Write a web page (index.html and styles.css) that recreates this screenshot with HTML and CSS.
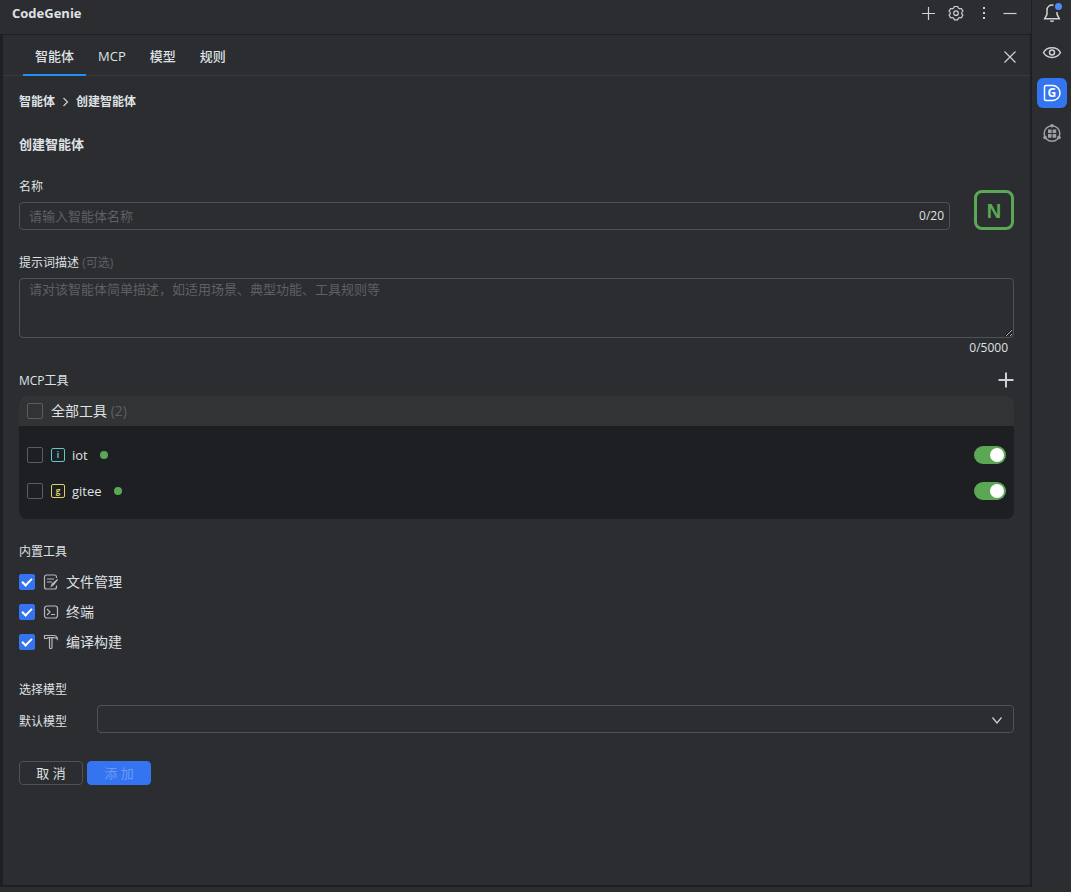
FILE: index.html
```html
<!DOCTYPE html>
<html lang="zh-CN">
<head>
<meta charset="utf-8">
<title>CodeGenie</title>
<link rel="stylesheet" href="styles.css">
</head>
<body>
<div class="app">
  <div class="window">
    <header class="titlebar">
      <h1 class="title">CodeGenie</h1>
      <div class="title-actions">
        <button class="icon-btn wide" aria-label="新建"><svg width="16" height="16" viewBox="0 0 16 16"><path d="M8.500 2v13M2 8.500h13"/></svg></button>
        <button class="icon-btn wide" aria-label="设置"><svg width="16" height="16" viewBox="0 0 16 16"><path d="M6.300 1.500h3.400l.6 1.500 1.300.8 1.800-.3 1.500 2.600-1.100 1.400v1.300l1.100 1.400-1.500 2.600-1.800-.3-1.300.8-.6 1.500H6.300l-.6-1.500-1.300-.8-1.800.3-1.500-2.600 1.100-1.400V7.500L1.100 6.100l1.500-2.600 1.800.3L5.700 3z" stroke-linejoin="round"/><circle cx="8" cy="8.150" r="2.300"/></svg></button>
        <button class="icon-btn" aria-label="更多"><svg width="16" height="16" viewBox="0 0 16 16"><path class="solid" d="M7 2h2v2H7zM7 7h2v2H7zM7 12h2v2H7z"/></svg></button>
        <button class="icon-btn" aria-label="最小化"><svg width="16" height="16" viewBox="0 0 16 16"><path d="M1.500 8.500h13"/></svg></button>
      </div>
    </header>

    <main class="panel">
      <nav class="tabs">
        <a class="tab active" href="#agent">智能体</a>
        <a class="tab" href="#mcp">MCP</a>
        <a class="tab" href="#model">模型</a>
        <a class="tab" href="#rules">规则</a>
        <button class="icon-btn close" aria-label="关闭"><svg width="16" height="16" viewBox="0 0 16 16"><path d="M2.500 2.500l11 11M13.500 2.500l-11 11"/></svg></button>
      </nav>

      <form class="form">
        <div class="crumbs">
          <a href="#agent">智能体</a>
          <svg width="9" height="12" viewBox="0 0 9 12"><path d="M2.500 2l4 4-4 4"/></svg>
          <span>创建智能体</span>
        </div>
        <h2 class="heading">创建智能体</h2>

        <div class="name-row">
          <div class="field">
            <label class="label" for="name">名称</label>
            <div class="input-box">
              <input id="name" class="input" type="text" placeholder="请输入智能体名称">
              <span class="count">0/20</span>
            </div>
          </div>
          <div class="avatar">N</div>
        </div>

        <div class="field section">
          <label class="label" for="desc">提示词描述 <span class="muted">(可选)</span></label>
          <textarea id="desc" class="textarea" placeholder="请对该智能体简单描述，如适用场景、典型功能、工具规则等"></textarea>
          <span class="count below">0/5000</span>
        </div>

        <section class="mcp">
          <div class="label-row">
            <h3 class="label">MCP工具</h3>
            <button type="button" class="icon-btn add" aria-label="添加工具"><svg width="16" height="16" viewBox="0 0 16 16"><path d="M8 .5v15M.5 8h15"/></svg></button>
          </div>
          <div class="card">
            <label class="card-head"><input class="check" type="checkbox"><span>全部工具 <span class="muted">(2)</span></span></label>
            <div class="card-body">
              <div class="tool">
                <label class="tool-name"><input class="check" type="checkbox"><span class="badge teal">i</span><span>iot</span></label>
                <span class="dot"></span>
                <input class="switch" type="checkbox" aria-label="启用 iot" checked>
              </div>
              <div class="tool">
                <label class="tool-name"><input class="check" type="checkbox"><span class="badge yellow">g</span><span>gitee</span></label>
                <span class="dot"></span>
                <input class="switch" type="checkbox" aria-label="启用 gitee" checked>
              </div>
            </div>
          </div>
        </section>

        <section class="field section">
          <h3 class="label">内置工具</h3>
          <div class="builtins">
            <label class="builtin"><input class="check" type="checkbox" checked><svg width="16" height="16" viewBox="0 0 16 16"><path d="M13.500 4V3a2 2 0 0 0-2-2h-8a2 2 0 0 0-2 2v10a2 2 0 0 0 2 2h8a2 2 0 0 0 2-2v-1.500M4 5h7M4 8h5M8.500 12l.6-1.800L14.600 5.500l-4 5z"/></svg><span>文件管理</span></label>
            <label class="builtin"><input class="check" type="checkbox" checked><svg width="16" height="16" viewBox="0 0 16 16"><rect x="1.500" y="2" width="13" height="12" rx="2.500"/><path d="M4 5l3 3-3 3M8 10.500h4"/></svg><span>终端</span></label>
            <label class="builtin"><input class="check" type="checkbox" checked><svg width="16" height="16" viewBox="0 0 16 16"><path d="M1.500 1.500v3h2.500l1-.8h5.500c1.800 0 3 .5 4 1.500C14.300 2.800 12.800 1.500 10.500 1.500H5zM6.500 4v9.500a1 1 0 0 0 1 1h.5a1 1 0 0 0 1-1V4"/></svg><span>编译构建</span></label>
          </div>
        </section>

        <section class="field section">
          <h3 class="label">选择模型</h3>
          <div class="model-row">
            <label class="label" for="model">默认模型</label>
            <div class="select-box">
              <select id="model" class="select"><option></option></select>
              <svg class="chevron" width="12" height="12" viewBox="0 0 12 12"><path d="M1.500 3.500L6 9l4.500-5.500"/></svg>
            </div>
          </div>
        </section>

        <div class="buttons">
          <button type="button" class="btn">取 消</button>
          <button type="button" class="btn primary" disabled>添 加</button>
        </div>
      </form>
    </main>
    <footer class="statusbar"></footer>
  </div>

  <aside class="rail">
    <button class="rail-btn first" aria-label="通知"><svg width="20" height="20" viewBox="0 0 20 20"><path d="M11.500 2.200A5 5 0 0 0 5 7.200v4L2.700 15.800h14.600L15 11.200V9"/><path class="solid" d="M7.800 17.500h4.400c-.5 2-3.900 2-4.400 0z"/><circle class="alert" cx="16.500" cy="3.500" r="3.500"/></svg></button>
    <button class="rail-btn" aria-label="预览"><svg width="20" height="20" viewBox="0 0 20 20"><path d="M1.500 9.500C5 3 15 3 18.500 9.500 15 16 5 16 1.500 9.500z"/><circle cx="10" cy="9.500" r="2.500"/></svg></button>
    <button class="rail-btn current" aria-label="CodeGenie"><svg width="20" height="20" viewBox="0 0 20 20"><path d="M4 2.500h6.500a7.500 7.500 0 0 1 0 15H4A1.500 1.500 0 0 1 2.500 16V4A1.500 1.500 0 0 1 4 2.500z"/><text x="9.800" y="14.300" text-anchor="middle">G</text></svg></button>
    <button class="rail-btn" aria-label="组件"><svg class="dim" width="20" height="20" viewBox="0 0 20 20"><circle cx="10" cy="10.500" r="7.800"/><path class="solid" d="M6 6.500h3.600v3.600H6zM10.600 6.500h3.600v3.600h-3.600zM6 11.100h3.600v3.600H6zM10.600 11.100h3.600v3.600h-3.600z"/><circle class="solid" cx="10" cy="2.800" r="1.800"/><circle class="solid" cx="3" cy="14.500" r="1.800"/><circle class="solid" cx="17" cy="14.500" r="1.800"/></svg></button>
  </aside>
</div>
</body>
</html>
```
FILE: styles.css
```css
* { box-sizing: border-box; }

:root {
  color-scheme: dark;
  --bg: #2b2d30;
  --edge: #1e1f22;
  --line: #4e5157;
  --text: #dfe1e5;
  --muted: #5d6065;
  --blue: #3574f0;
  --green: #5ba854;
}

body {
  margin: 0;
  background: var(--bg);
  color: var(--text);
  font: 12px/20px "Open Sans", "Noto Sans CJK SC", sans-serif;
}

h1, h2, h3 { margin: 0; }
a { color: inherit; text-decoration: none; }
button, input, textarea, select { font: inherit; color: inherit; }

svg {
  display: block;
  flex: none;
  fill: none;
  stroke: #ced0d6;
  stroke-width: 1.2;
}
svg .solid { fill: #ced0d6; stroke: none; }

.app { display: flex; min-height: 100vh; }
.window { flex: 1; min-width: 0; display: flex; flex-direction: column; }

.titlebar {
  display: flex;
  align-items: center;
  justify-content: space-between;
  height: 35px;
  padding: 0 13px 8px 12px;
  border-bottom: 1px solid var(--edge);
  border-right: 1px solid var(--edge);
}
.title { font-size: 13px; font-weight: 700; }
.title-actions { display: flex; gap: 10px; }
.title-actions .wide { padding-right: 2px; }

.icon-btn {
  display: flex;
  padding: 0;
  border: 0;
  background: none;
}

.panel {
  flex: 1;
  border: solid var(--edge);
  border-width: 0 2px 2px 3px;
}
.statusbar { height: 5px; }

.tabs {
  display: flex;
  align-items: center;
  height: 41px;
  padding: 0 12px 0 20px;
  border-bottom: 1px solid #393b40;
  font-size: 13px;
  font-weight: 500;
}
.tab { height: 41px; padding: 0 12px; line-height: 42px; }
.tab.active { border-bottom: 2px solid #2090f5; }
.close { margin-left: auto; padding-top: 4px; }

.form { padding: 16px; }
.crumbs { display: flex; align-items: center; gap: 6px; font-weight: 700; }
.heading { margin: 22px 0; font-size: 13px; line-height: 20px; }

.label { display: block; padding-top: 2px; font-size: 12px; font-weight: 400; line-height: 20px; }
.muted { color: var(--muted); }
.field { flex: 1; display: flex; flex-direction: column; gap: 5px; }
.section { margin-top: 21px; }

.name-row { display: flex; align-items: flex-end; gap: 24px; margin-top: -1px; }
.input-box {
  display: flex;
  align-items: center;
  height: 28px;
  padding: 0 5px 0 9px;
  border: 1px solid var(--line);
  border-radius: 4px;
}
.input {
  flex: 1;
  min-width: 0;
  padding: 0;
  border: 0;
  outline: 0;
  background: none;
  font-size: 13px;
}
::placeholder { color: var(--muted); opacity: 1; }

.avatar {
  display: grid;
  place-items: center;
  width: 40px;
  height: 40px;
  padding-top: 2px;
  border: 3px solid var(--green);
  border-radius: 8px;
  color: var(--green);
  font: 700 20px/20px "Liberation Sans", sans-serif;
}

.textarea {
  display: block;
  width: 100%;
  height: 60px;
  padding: 0 9px;
  border: 1px solid var(--line);
  border-radius: 4px;
  background: none;
  font-size: 13px;
  line-height: 20px;
  resize: vertical;
}
.count.below { align-self: flex-end; margin: -5px 6px 0 0; }

.mcp { margin-top: 11px; }
.label-row { display: flex; align-items: center; justify-content: space-between; margin-bottom: 5px; }
.add svg { stroke-width: 2; }

.card { overflow: hidden; border-radius: 8px; background: var(--edge); font-size: 14px; }
.card-head {
  display: flex;
  align-items: center;
  gap: 8px;
  height: 30px;
  padding: 0 8px;
  background: #323335;
}
.card-body { padding: 11px 8px 10px; }
.tool { display: flex; align-items: center; gap: 12px; height: 36px; font-size: 13px; }
.tool-name { display: flex; align-items: center; gap: 7px; }
.tool-name .check { margin-right: 1px; }
.badge {
  display: grid;
  place-items: center;
  width: 14px;
  height: 14px;
  border: 1px solid;
  border-radius: 2px;
  font-size: 8px;
  font-weight: 700;
  line-height: 8px;
}
.teal { color: #62c8c8; }
.yellow { color: #d8d468; }
.dot { width: 8px; height: 8px; border-radius: 50%; background: var(--green); }

.check {
  appearance: none;
  flex: none;
  display: grid;
  place-items: center;
  width: 16px;
  height: 16px;
  margin: 0;
  border: 1px solid #5a5d63;
  border-radius: 2px;
}
.check:checked { border-color: var(--blue); background: var(--blue); }
.check:checked::before {
  content: "";
  box-sizing: border-box;
  width: 10px;
  height: 6px;
  margin-bottom: 2px;
  border: solid #fff;
  border-width: 0 0 2px 2px;
  rotate: -45deg;
}

.switch {
  appearance: none;
  display: flex;
  align-items: center;
  justify-content: flex-end;
  width: 32px;
  height: 18px;
  margin: 0 0 0 auto;
  padding: 0 2px;
  border-radius: 9px;
  background: var(--green);
}
.switch::before { content: ""; width: 14px; height: 14px; border-radius: 50%; background: #fff; }
.switch:not(:checked) { justify-content: flex-start; background: var(--line); }

.builtin { display: flex; align-items: center; gap: 7px; height: 30px; font-size: 14px; }
.builtin .check { margin-right: 1px; }
.builtin svg { stroke: #b4b8bf; }

.model-row { display: flex; align-items: center; }
.model-row .label { width: 78px; padding-top: 5px; }
.select-box { position: relative; flex: 1; }
.select {
  appearance: none;
  display: block;
  width: 100%;
  height: 28px;
  padding: 0 28px 0 9px;
  border: 1px solid var(--line);
  border-radius: 4px;
  background: none;
}
.chevron { position: absolute; top: 9px; right: 11px; pointer-events: none; }

.buttons { display: flex; gap: 4px; margin-top: 28px; }
.btn {
  width: 64px;
  height: 24px;
  padding: 0;
  border: 1px solid var(--line);
  border-radius: 4px;
  background: none;
  font-size: 13px;
  line-height: 20px;
}
.btn.primary { border-color: var(--blue); background: var(--blue); color: #6c99f2; }

.rail {
  display: flex;
  flex-direction: column;
  align-items: center;
  gap: 10px;
  width: 39px;
}
.rail-btn {
  display: grid;
  place-items: center;
  width: 30px;
  height: 30px;
  padding: 0;
  border: 0;
  border-radius: 6px;
  background: none;
}
.rail-btn.first { height: 28px; padding-bottom: 2px; }
.rail-btn svg { stroke-width: 1.5; overflow: visible; }
.rail-btn .alert { fill: #548af7; stroke: none; }
.rail-btn.current { background: var(--blue); }
.current svg { stroke: #fff; }
.current text { fill: #fff; stroke: none; font: 700 12px "Open Sans", sans-serif; }
.rail-btn .dim { stroke: #9da0a8; }
.dim .solid { fill: #9da0a8; }
```
